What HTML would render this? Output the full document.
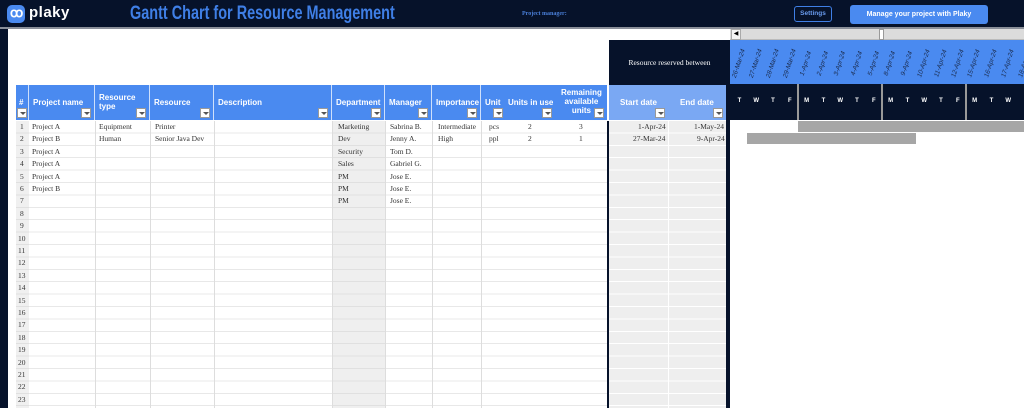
<!DOCTYPE html><html><head><meta charset="utf-8"><style>
*{margin:0;padding:0;box-sizing:border-box}
body{width:1024px;height:408px;overflow:hidden;background:#06122a;position:relative;font-family:"Liberation Serif",serif}
.a{position:absolute}
.hd{position:absolute;top:85px;height:35px;background:#4a8af0;color:#fff;font:bold 8px "Liberation Sans",sans-serif;border-right:1px solid #cfe0fb}
.hd span{position:absolute;left:4px;top:13px;line-height:9px}
.fb{position:absolute;bottom:2px;right:3px;width:10px;height:10px;background:#fff;border:1px solid #999}
.fb:after{content:"";position:absolute;left:2px;top:3px;border-left:3px solid transparent;border-right:3px solid transparent;border-top:3px solid #555}
.t{position:absolute;font-size:7.5px;color:#333;line-height:12px;white-space:nowrap}
.vl{position:absolute;top:121px;bottom:0;width:1px;background:#ddd}
.dt{position:absolute;top:60px;font:italic 6.5px "Liberation Sans",sans-serif;color:#1a2a4a;transform:rotate(-72deg);transform-origin:center;white-space:nowrap;width:40px;text-align:center}
.dy{position:absolute;top:98px;font:bold 6px "Liberation Sans",sans-serif;color:#fff;width:16.8px;text-align:center}
</style></head><body>
<div class="a" style="left:0;top:27px;width:1024px;height:2px;background:#8a8f99"></div>
<div class="a" style="left:7px;top:5px;width:18px;height:18px;border-radius:5px;background:#4a8af0"></div>
<div class="a" style="left:10px;top:5px;color:#fff;font:bold 13px 'Liberation Sans',sans-serif">ꝏ</div>
<div class="a" style="left:29px;top:4px;color:#fff;font:bold 15px 'Liberation Sans',sans-serif;letter-spacing:.5px">plaky</div>
<div class="a" style="left:130px;top:3px;color:#3f7fe6;font:bold 19px 'Liberation Sans',sans-serif;transform:scaleX(0.76);transform-origin:left top;white-space:nowrap">Gantt Chart for Resource Management</div>
<div class="a" style="left:522px;top:11px;color:#4a7fd8;font:bold 6px 'Liberation Serif',serif">Project manager:</div>
<div class="a" style="left:794px;top:6px;width:38px;height:16px;border:1.5px solid #3f7fe6;border-radius:3px;color:#6a9cf0;font:bold 6.5px 'Liberation Sans',sans-serif;text-align:center;line-height:13px">Settings</div>
<div class="a" style="left:850px;top:5px;width:138px;height:19px;background:#4a8af0;border-radius:3px;color:#fff;font:bold 7px 'Liberation Sans',sans-serif;text-align:center;line-height:19px">Manage your project with Plaky</div>
<div class="a" style="left:8px;top:29px;width:722px;height:379px;background:#fff"></div>
<div class="a" style="left:16px;top:121px;width:591px;height:287px;background:repeating-linear-gradient(to bottom,#fff 0 11.4px,#e8e8e8 11.4px 12.4px)"></div>
<div class="a" style="left:16px;top:121px;width:13px;height:287px;background:repeating-linear-gradient(to bottom,#f0f0f0 0 11.4px,#e0e0e0 11.4px 12.4px)"></div>
<div class="a" style="left:332px;top:121px;width:53px;height:287px;background:repeating-linear-gradient(to bottom,#efefef 0 11.4px,#e0e0e0 11.4px 12.4px)"></div>
<div class="vl" style="left:95px"></div><div class="vl" style="left:150px"></div><div class="vl" style="left:214px"></div><div class="vl" style="left:332px"></div><div class="vl" style="left:385px"></div><div class="vl" style="left:432px"></div><div class="vl" style="left:481px"></div><div class="vl" style="left:607px;width:2px;background:#06122a"></div>
<div class="hd" style="left:16px;width:13px"><span style="left:3px">#</span><div class="fb" style="right:1px"></div></div>
<div class="hd" style="left:29px;width:66px"><span>Project name</span><div class="fb"></div></div>
<div class="hd" style="left:95px;width:55px"><span style="top:8px">Resource<br>type</span><div class="fb"></div></div>
<div class="hd" style="left:150px;width:64px"><span>Resource</span><div class="fb"></div></div>
<div class="hd" style="left:214px;width:118px"><span>Description</span><div class="fb"></div></div>
<div class="hd" style="left:332px;width:53px"><span>Department</span><div class="fb"></div></div>
<div class="hd" style="left:385px;width:47px"><span>Manager</span><div class="fb"></div></div>
<div class="hd" style="left:432px;width:49px"><span>Importance</span><div class="fb"></div></div>
<div class="hd" style="left:481px;width:24px;border:0"><span>Unit</span><div class="fb" style="right:2px"></div></div>
<div class="hd" style="left:505px;width:50px;border:0"><span style="left:3px">Units in use</span><div class="fb"></div></div>
<div class="hd" style="left:555px;width:52px;border:0"><span style="top:3px;left:6px;text-align:center">Remaining<br>available<br>units</span><div class="fb"></div></div>
<div class="a" style="left:609px;top:40px;width:121px;height:45px;background:#06122a;color:#fff;font:7.5px 'Liberation Serif',serif;line-height:45px;text-align:center">Resource reserved between</div>
<div class="a" style="left:609px;top:121px;width:117px;height:287px;background:repeating-linear-gradient(to bottom,#eeeeee 0 11.4px,#fff 11.4px 12.4px)"></div>
<div class="a" style="left:668px;top:121px;width:1px;height:287px;background:#fff"></div>
<div class="hd" style="left:609px;width:59px;background:#7aa8f3;border:0"><span style="left:11px">Start date</span><div class="fb" style="right:3px"></div></div>
<div class="hd" style="left:668px;width:58px;background:#7aa8f3;border:0"><span style="left:12px">End date</span><div class="fb" style="right:3px"></div></div>
<div class="a" style="left:726px;top:40px;width:4px;height:368px;background:#06122a"></div>
<div style="position:absolute;left:0;top:121px">
<div class="t" style="left:20px;top:0">1</div><div class="t" style="left:20px;top:12.4px">2</div><div class="t" style="left:20px;top:24.8px">3</div><div class="t" style="left:20px;top:37.2px">4</div><div class="t" style="left:20px;top:49.6px">5</div><div class="t" style="left:20px;top:62px">6</div><div class="t" style="left:20px;top:74.4px">7</div><div class="t" style="left:20px;top:86.8px">8</div><div class="t" style="left:20px;top:99.2px">9</div><div class="t" style="left:18px;top:111.6px">10</div><div class="t" style="left:18px;top:124px">11</div><div class="t" style="left:18px;top:136.4px">12</div><div class="t" style="left:18px;top:148.8px">13</div><div class="t" style="left:18px;top:161.2px">14</div><div class="t" style="left:18px;top:173.6px">15</div><div class="t" style="left:18px;top:186px">16</div><div class="t" style="left:18px;top:198.4px">17</div><div class="t" style="left:18px;top:210.8px">18</div><div class="t" style="left:18px;top:223.2px">19</div><div class="t" style="left:18px;top:235.6px">20</div><div class="t" style="left:18px;top:248px">21</div><div class="t" style="left:18px;top:260.4px">22</div><div class="t" style="left:18px;top:272.8px">23</div>
<div class="t" style="left:32px;top:0">Project A</div><div class="t" style="left:32px;top:12.4px">Project B</div><div class="t" style="left:32px;top:24.8px">Project A</div><div class="t" style="left:32px;top:37.2px">Project A</div><div class="t" style="left:32px;top:49.6px">Project A</div><div class="t" style="left:32px;top:62px">Project B</div>
<div class="t" style="left:99px;top:0">Equipment</div><div class="t" style="left:99px;top:12.4px">Human</div>
<div class="t" style="left:155px;top:0">Printer</div><div class="t" style="left:155px;top:12.4px">Senior Java Dev</div>
<div class="t" style="left:338px;top:0">Marketing</div><div class="t" style="left:338px;top:12.4px">Dev</div><div class="t" style="left:338px;top:24.8px">Security</div><div class="t" style="left:338px;top:37.2px">Sales</div><div class="t" style="left:338px;top:49.6px">PM</div><div class="t" style="left:338px;top:62px">PM</div><div class="t" style="left:338px;top:74.4px">PM</div>
<div class="t" style="left:390px;top:0">Sabrina B.</div><div class="t" style="left:390px;top:12.4px">Jenny A.</div><div class="t" style="left:390px;top:24.8px">Tom D.</div><div class="t" style="left:390px;top:37.2px">Gabriel G.</div><div class="t" style="left:390px;top:49.6px">Jose E.</div><div class="t" style="left:390px;top:62px">Jose E.</div><div class="t" style="left:390px;top:74.4px">Jose E.</div>
<div class="t" style="left:438px;top:0">Intermediate</div><div class="t" style="left:438px;top:12.4px">High</div>
<div class="t" style="left:489px;top:0">pcs</div><div class="t" style="left:489px;top:12.4px">ppl</div>
<div class="t" style="left:528px;top:0">2</div><div class="t" style="left:528px;top:12.4px">2</div>
<div class="t" style="left:579px;top:0">3</div><div class="t" style="left:579px;top:12.4px">1</div>
<div class="t" style="left:638px;top:0">1-Apr-24</div><div class="t" style="left:633px;top:12.4px">27-Mar-24</div>
<div class="t" style="left:694px;top:0">1-May-24</div><div class="t" style="left:697px;top:12.4px">9-Apr-24</div>
</div>
<div class="a" style="left:730px;top:29px;width:294px;height:379px;background:#fff"></div>
<div class="a" style="left:730px;top:29px;width:294px;height:11px;background:#dcdcdc;border-bottom:1px solid #bbb"></div>
<div class="a" style="left:731px;top:29px;width:10px;height:11px;background:#f4f4f4;border:1px solid #aaa;font-size:6px;line-height:9px;text-align:center">◀</div>
<div class="a" style="left:879px;top:29px;width:5px;height:11px;background:#fff;border:1px solid #999"></div>
<div class="a" style="left:730px;top:40px;width:294px;height:44px;background:#4a8af0"></div>
<div class="a" style="left:730px;top:84px;width:294px;height:36px;background:#06122a"></div>
<div class="a" style="left:797px;top:84px;width:2px;height:36px;background:#999"></div>
<div class="a" style="left:881px;top:84px;width:2px;height:36px;background:#999"></div>
<div class="a" style="left:965px;top:84px;width:2px;height:36px;background:#999"></div>
<div class="dt" style="left:719px">26-Mar-24</div><div class="dt" style="left:736px">27-Mar-24</div><div class="dt" style="left:753px">28-Mar-24</div><div class="dt" style="left:770px">29-Mar-24</div><div class="dt" style="left:786px">1-Apr-24</div><div class="dt" style="left:803px">2-Apr-24</div><div class="dt" style="left:820px">3-Apr-24</div><div class="dt" style="left:837px">4-Apr-24</div><div class="dt" style="left:854px">5-Apr-24</div><div class="dt" style="left:870px">8-Apr-24</div><div class="dt" style="left:887px">9-Apr-24</div><div class="dt" style="left:904px">10-Apr-24</div><div class="dt" style="left:921px">11-Apr-24</div><div class="dt" style="left:938px">12-Apr-24</div><div class="dt" style="left:954px">15-Apr-24</div><div class="dt" style="left:971px">16-Apr-24</div><div class="dt" style="left:988px">17-Apr-24</div><div class="dt" style="left:1005px">18-Apr-24</div>
<div class="dy" style="left:731px">T</div><div class="dy" style="left:747.8px">W</div><div class="dy" style="left:764.6px">T</div><div class="dy" style="left:781.4px">F</div><div class="dy" style="left:798.2px">M</div><div class="dy" style="left:815px">T</div><div class="dy" style="left:831.8px">W</div><div class="dy" style="left:848.6px">T</div><div class="dy" style="left:865.4px">F</div><div class="dy" style="left:882.2px">M</div><div class="dy" style="left:899px">T</div><div class="dy" style="left:915.8px">W</div><div class="dy" style="left:932.6px">T</div><div class="dy" style="left:949.4px">F</div><div class="dy" style="left:966.2px">M</div><div class="dy" style="left:983px">T</div><div class="dy" style="left:999.8px">W</div>
<div class="a" style="left:798px;top:121px;width:226px;height:11px;background:#a6a6a6"></div>
<div class="a" style="left:747px;top:133px;width:169px;height:11px;background:#a6a6a6"></div>
</body></html>
